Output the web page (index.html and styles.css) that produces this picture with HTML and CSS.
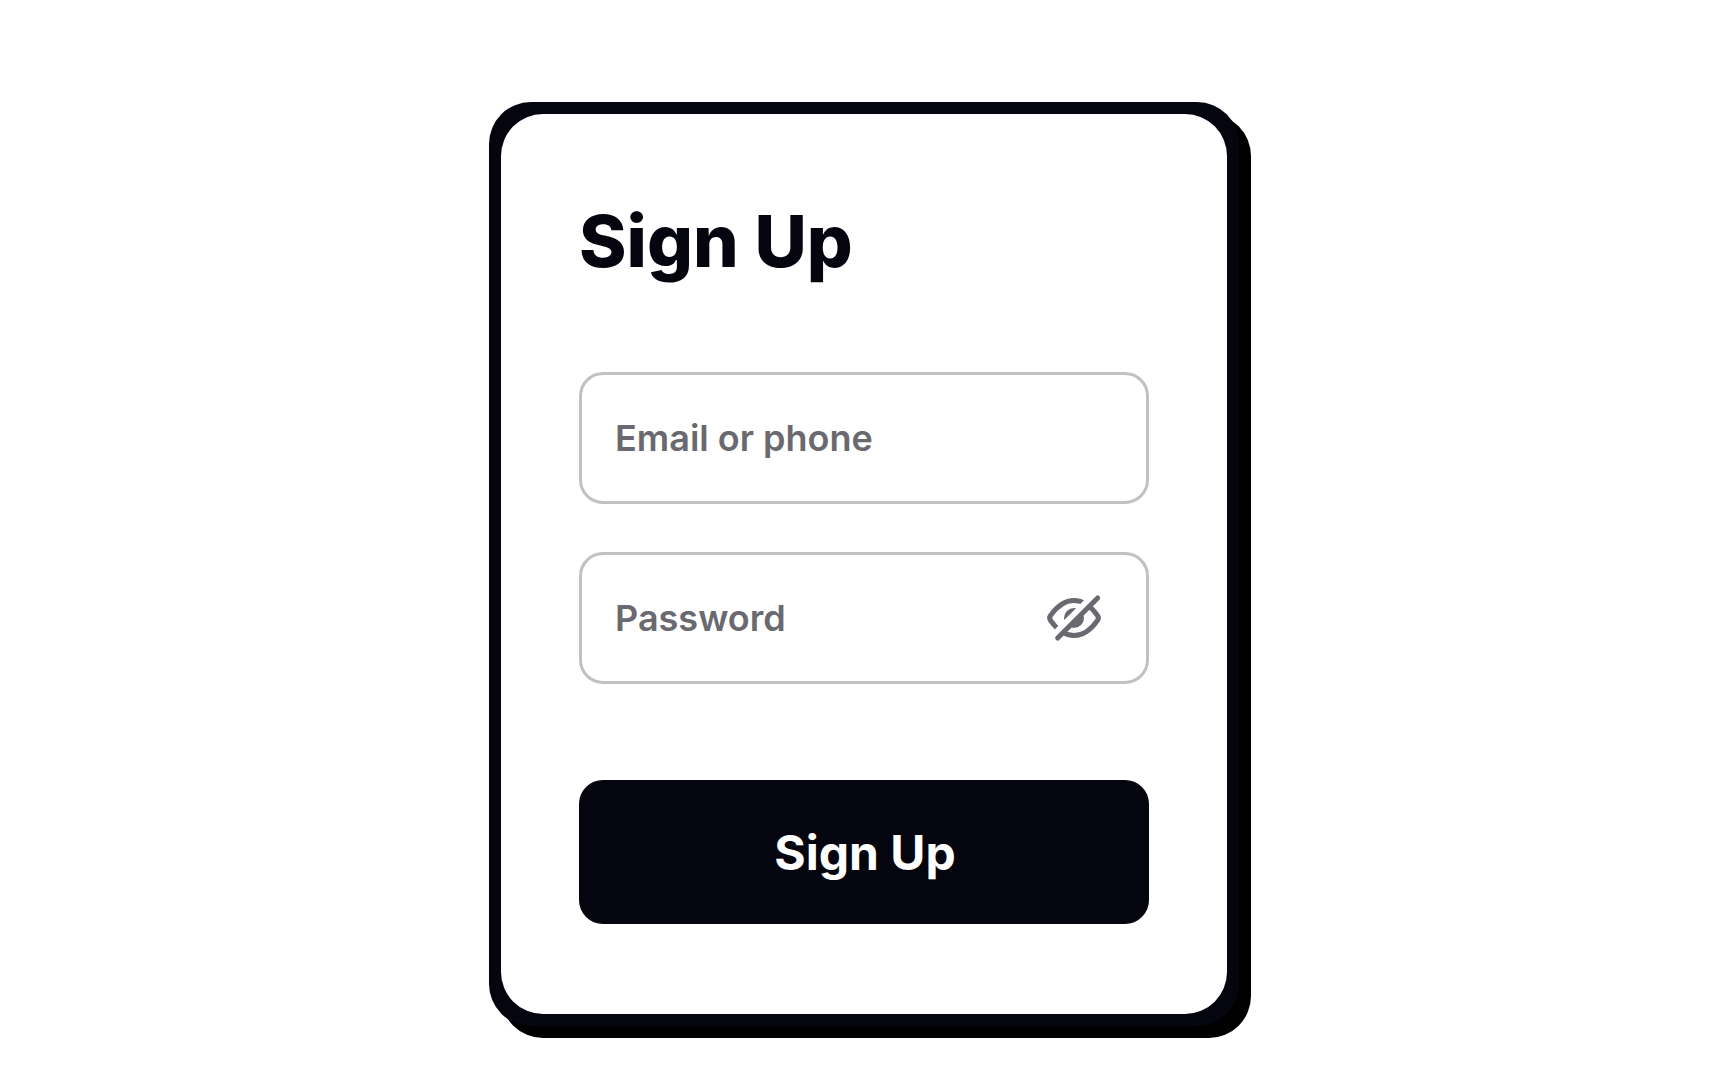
FILE: index.html
```
<!DOCTYPE html>
<html lang="en">
<head>
<meta charset="utf-8">
<meta name="viewport" content="width=device-width, initial-scale=1">
<title>Sign Up</title>
<link rel="stylesheet" href="styles.css">
</head>
<body>
<main class="page">
  <div class="card">
    <form class="form">
      <h1 class="title">Sign Up</h1>
      <div class="fields">
        <div class="field">
          <input class="input" type="text" name="login" placeholder="Email or phone" aria-label="Email or phone">
        </div>
        <div class="field">
          <input class="input" type="password" name="password" placeholder="Password" aria-label="Password">
          <button class="toggle" type="button" aria-label="Show password">
            <svg class="icon" viewBox="72 144 180 180" aria-hidden="true">
              <mask id="gap" maskUnits="userSpaceOnUse" x="72" y="144" width="180" height="180">
                <rect x="72" y="144" width="180" height="180" fill="#fff"/>
                <path d="M229 144 L263 144 L83 324 L49 324 Z" fill="#000"/>
              </mask>
              <g mask="url(#gap)">
                <path d="M162 181.500C136 181.500 111 199 92 226Q86 234 92 242C111 269 136 286.500 162 286.500C188 286.500 213 269 232 242Q238 234 232 226C213 199 188 181.500 162 181.500Z" fill="none" stroke="currentColor" stroke-width="15"/>
                <circle cx="162" cy="234" r="30" fill="currentColor"/>
              </g>
              <path d="M113 294L233 174" fill="none" stroke="currentColor" stroke-width="15" stroke-linecap="round"/>
            </svg>
          </button>
        </div>
      </div>
      <button class="submit" type="submit">Sign Up</button>
    </form>
  </div>
</main>
</body>
</html>
```
FILE: styles.css
```
* {
  box-sizing: border-box;
}

body {
  margin: 0;
  background: #fff;
  color: #05050f;
  font-family: Inter, "Liberation Sans", sans-serif;
}

.page {
  display: flex;
  justify-content: center;
  padding: 102px 24px 42px;
}

.card {
  width: 100%;
  max-width: 750px;
  padding: 12px;
  border-radius: 42px;
  background: #05050f;
  box-shadow: 12px 12px 0 #000;
}

.form {
  display: flex;
  flex-direction: column;
  padding: 90px 78px;
  border-radius: 42px;
  background: #fff;
}

.title {
  margin: 0 0 94px;
  font-size: 72px;
  font-weight: 800;
  line-height: 74px;
}

.fields {
  display: flex;
  flex-direction: column;
  gap: 48px;
  margin-bottom: 96px;
}

.field {
  display: flex;
  align-items: center;
  height: 132px;
  padding: 0 42px 0 33px;
  border: 3px solid #c1c1c3;
  border-radius: 24px;
}

.input {
  flex: 1;
  min-width: 0;
  padding: 0;
  border: 0;
  outline: 0;
  background: none;
  color: #05050f;
  font: 600 36px/46px Inter, "Liberation Sans", sans-serif;
}

.input::placeholder {
  color: #69696f;
  opacity: 1;
}

.toggle {
  padding: 0;
  border: 0;
  background: none;
  color: #69696f;
}

.icon {
  display: block;
  width: 60px;
  height: 60px;
}

.submit {
  height: 144px;
  padding: 2px 0 0 2px;
  border: 0;
  border-radius: 24px;
  background: #05050f;
  color: #fff;
  font: 700 48px/60px Inter, "Liberation Sans", sans-serif;
}
```
